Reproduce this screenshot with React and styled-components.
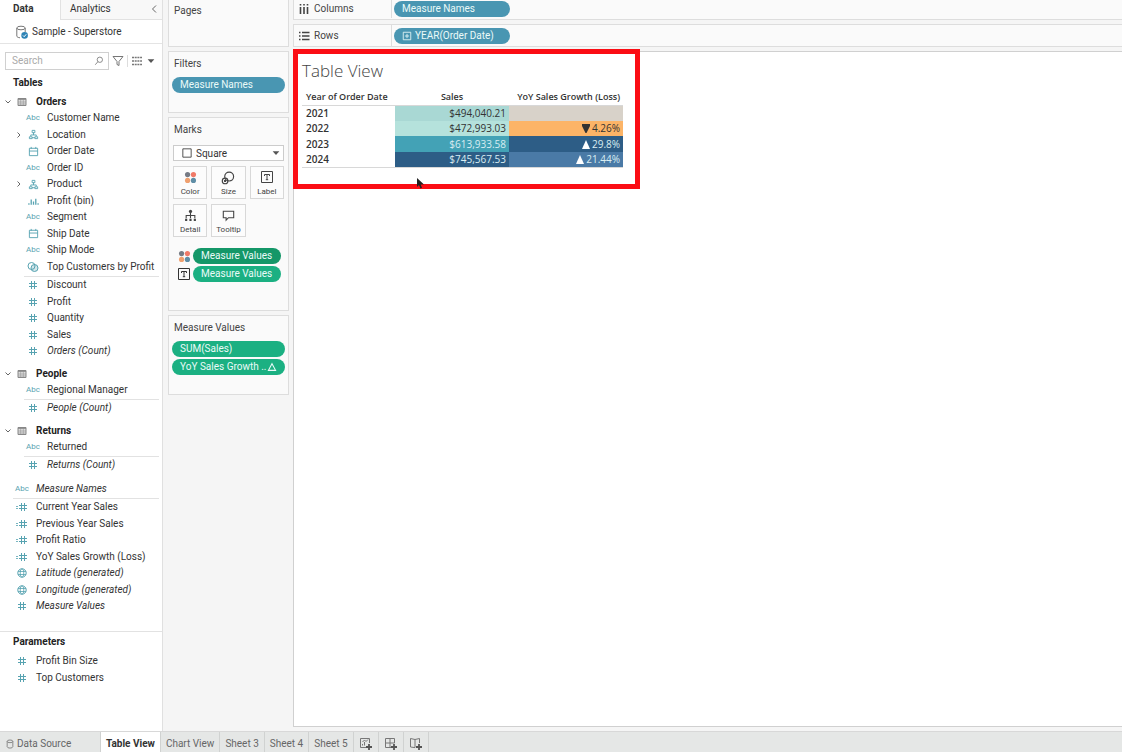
import React from "react";
import styled, { createGlobalStyle, css } from "styled-components";

const GlobalStyle = createGlobalStyle`
  * {
    box-sizing: border-box;
  }

  body {
    margin: 0;
    background: #f5f5f5;
    color: #333;
    font: 10px/16px Roboto, "Liberation Sans", sans-serif;
  }

  button, input, select {
    font: inherit;
    color: inherit;
  }

  svg {
    display: block;
    flex: none;
  }
`;

/* ---------- icons ---------- */

const Icon = ({ size = 12, children, ...rest }) => (
  <svg
    width={size}
    height={size}
    viewBox="0 0 12 12"
    fill="none"
    stroke="currentColor"
    strokeWidth="1"
    aria-hidden="true"
    {...rest}
  >
    {children}
  </svg>
);

const Hash = () => (
  <Icon>
    <path d="M4.5 2v8M7.5 2v8M2 4.5h8M2 7.5h8" />
  </Icon>
);

const CalcHash = () => (
  <Icon>
    <path d="M5.5 2v8M8.5 2v8M3 4.5h8M3 7.5h8" />
    <path d="M0 5.5h2M0 7.5h2" strokeWidth=".8" />
  </Icon>
);

const Calendar = () => (
  <Icon size={11}>
    <path d="M1.5 2.5h9v8h-9zM1.5 5.5h9M3.5 1v2M8.5 1v2" />
  </Icon>
);

const Hierarchy = () => (
  <Icon size={11}>
    <path d="M4.5 1.5h3v2.5h-3zM6 4v2.5M3 8V6.5h6V8M1.5 8.5h3v2h-3zM7.5 8.5h3v2h-3zM4.5 9.5h3" />
  </Icon>
);

const Bins = () => (
  <Icon size={11} strokeWidth="1.4">
    <path d="M1 10.5V9M3.5 10.5V5M6 10.5V7M8.5 10.5V4M11 10.5V9" />
  </Icon>
);

const SetIcon = () => (
  <Icon>
    <circle cx="4.5" cy="5" r="3.5" />
    <circle cx="7.5" cy="7" r="3.5" fill="#4a9bab" fillOpacity=".25" />
  </Icon>
);

const Globe = () => (
  <Icon>
    <circle cx="6" cy="6" r="4.2" />
    <ellipse cx="6" cy="6" rx="1.8" ry="4.2" strokeWidth=".8" />
    <path d="M2 4.5h8M2 7.5h8" strokeWidth=".8" />
  </Icon>
);

const TableIcon = () => (
  <Icon stroke="#888">
    <path d="M2 2.5h8v7H2z" fill="#ddd" />
    <path d="M2 3h8" strokeWidth="1.6" />
    <path d="M2 6h8M2 8h8M4.7 3v6M7.3 3v6" strokeWidth=".5" />
  </Icon>
);

const Chevron = ({ dir }) => {
  const paths = {
    down: "M3.5 4.5L6 7l2.5-2.5",
    right: "M4.5 3.5L7 6 4.5 8.5",
    left: "M8 2.5L4.5 6 8 9.5"
  };
  return (
    <Icon size={12} stroke="#666">
      <path d={paths[dir]} />
    </Icon>
  );
};

const Caret = () => (
  <Icon size={10} stroke="none" fill="#555">
    <path d="M2 4h8L6 8.5z" />
  </Icon>
);

const ColorDots = () => (
  <Icon size={13} stroke="none">
    <circle cx="3.3" cy="3.3" r="2.4" fill="#767b85" />
    <circle cx="8.7" cy="3.3" r="2.4" fill="#f07a68" />
    <circle cx="3.3" cy="8.7" r="2.4" fill="#efa06f" />
    <circle cx="8.7" cy="8.7" r="2.4" fill="#5f8ea6" />
  </Icon>
);

const LabelIcon = () => (
  <Icon>
    <path d="M.5.5h11v11H.5zM3.5 5V3.5h5V5M6 3.5v5.2M4.8 8.7h2.4" />
  </Icon>
);

const SizeIcon = () => (
  <Icon size={14}>
    <circle cx="7" cy="4.8" r="3.8" />
    <circle cx="3.5" cy="8.5" r="2.4" />
    <circle cx="3.5" cy="8.5" r=".5" />
  </Icon>
);

const DetailIcon = () => (
  <Icon size={13}>
    <circle cx="6" cy="2.2" r="1.5" fill="currentColor" stroke="none" />
    <path d="M6 3v5.5M2 8.5V6h8v2.5" />
    <path d="M1 9h2v2H1zM5 9h2v2H5zM9 9h2v2H9z" fill="currentColor" stroke="none" />
  </Icon>
);

const TooltipIcon = () => (
  <Icon size={13}>
    <path d="M1.2 2h9.6v6H6l-2.2 2.3V8H1.2z" />
  </Icon>
);

const ColumnsIcon = () => (
  <Icon strokeWidth="1.6">
    <path d="M2.5 1v1.6M6 1v1.6M9.5 1v1.6M2.5 4v7M6 4v7M9.5 4v7" />
  </Icon>
);

const RowsIcon = () => (
  <Icon strokeWidth="1.4">
    <path d="M1 2.5h1.5M1 6h1.5M1 9.5h1.5M4 2.5h7.5M4 6h7.5M4 9.5h7.5" />
  </Icon>
);

const Plus = () => (
  <Icon size={10}>
    <path d="M1.5 1.5h9v9h-9zM6 3.5v5M3.5 6h5" />
  </Icon>
);

const Delta = () => (
  <Icon size={10} strokeWidth="1.3">
    <path d="M6 2l4.3 8H1.7z" />
  </Icon>
);

const DataSourceIcon = () => (
  <svg width="14" height="14" viewBox="0 0 14 14" fill="none" stroke="#777" aria-hidden="true">
    <ellipse cx="6" cy="3" rx="4.2" ry="1.8" />
    <path d="M1.8 3v8c0 1 1.5 1.6 3.2 1.8M10.2 3v4" />
    <circle cx="9.6" cy="10.4" r="3.3" fill="#2e83b5" stroke="none" />
    <path d="M8 10.5l1.2 1.2 2-2.4" stroke="#fff" />
  </svg>
);

const Cylinder = () => (
  <Icon size={10} stroke="#777">
    <ellipse cx="6" cy="2.8" rx="3.4" ry="1.6" />
    <path d="M2.6 2.8v6.6c0 2 6.8 2 6.8 0V2.8" />
  </Icon>
);

const newSheetPaths = {
  sheet: "M10.5 6V1.5h-9v9H7M3.5 8.5V7M5.5 8.5V5M3.5 5l2-2 1.5 1.5 2-2",
  dashboard: "M10.5 6V1.5h-9v9H7M1.5 6h9M6 1.5v9",
  story: "M10.5 6V1.5L6 2.5l-4.5-1v8.5l4.5.6M6 2.5v8"
};

const NewSheetIcon = ({ kind }) => (
  <svg width="14" height="14" viewBox="0 0 14 14" fill="none" stroke="#777" aria-hidden="true">
    <path d={newSheetPaths[kind]} />
    <path d="M10 7v6M7 10h6" stroke="#555" strokeWidth="1.8" />
  </svg>
);

/* ---------- layout ---------- */

const Page = styled.div`
  display: flex;
  flex-direction: column;
  min-height: 100vh;
`;

const Workspace = styled.div`
  display: flex;
  flex: 1;
`;

/* ---------- data pane ---------- */

const DataPane = styled.aside`
  flex: none;
  width: 163px;
  background: #fff;
  border-right: 1px solid #e0e0e0;
`;

const PaneTabs = styled.div`
  display: flex;
  height: 20px;
`;

const PaneTab = styled.button`
  display: flex;
  align-items: center;
  justify-content: space-between;
  border: 0;
  padding: 0 2px 1px 9px;
  background: #f8f8f8;
  border-left: 1px solid #e2e2e2;
  border-bottom: 1px solid #e2e2e2;
  flex: 1;

  ${({ $active }) =>
    $active &&
    css`
      flex: none;
      width: 60px;
      padding-left: 13px;
      background: #fff;
      border-color: transparent;
      border-left: 0;
      font-weight: 700;
    `}
`;

const DataSourceRow = styled.div`
  display: flex;
  align-items: center;
  gap: 3px;
  height: 24px;
  padding: 0 15px;
  border-bottom: 1px solid #e4e4e4;
`;

const SearchRow = styled.div`
  display: flex;
  align-items: center;
  padding: 8px 8px 5px 5px;
  color: #777;
`;

const SearchBox = styled.label`
  display: flex;
  align-items: center;
  width: 104px;
  height: 18px;
  padding: 0 4px 0 6px;
  border: 1px solid #d0d0d0;

  input {
    flex: 1;
    min-width: 0;
    padding: 0;
    border: 0;
    outline: 0;
    background: none;
  }

  input::placeholder {
    color: #aaa;
  }
`;

const IconButton = styled.button`
  display: flex;
  align-items: center;
  padding: 0;
  margin-left: 3px;
  border: 0;
  background: none;
`;

const ViewButton = styled(IconButton)`
  gap: 3px;
  padding-left: 3px;
  border-left: 1px solid #ddd;
`;

const PaneHeading = styled.h2`
  margin: 0 0 3px;
  padding-left: 13px;
  font-size: 10px;
  line-height: 16px;
  color: #222;
`;

const Group = styled.section`
  margin-bottom: 7px;
`;

const GroupTitle = styled.h3`
  display: flex;
  align-items: center;
  margin: 0;
  height: 16px;
  padding-left: 2px;
  font-size: 10px;
  color: #222;
`;

const IconSlot = styled.span`
  display: flex;
  justify-content: center;
  width: 16px;
  margin-right: 6px;
  color: #57a3b1;
`;

const ChevronSlot = styled.span`
  width: 12px;
`;

const Fields = styled.ul`
  list-style: none;
  margin: 0;
  padding: 0;
  margin-left: ${({ $nested }) => ($nested ? "24px" : "13px")};

  & + & {
    margin-top: 1px;
    border-top: 1px solid #e2e2e2;
    margin-right: 3px;
  }
`;

const FieldItem = styled.li`
  display: flex;
  align-items: center;
  height: 16px;
  margin-left: -11px;
  white-space: nowrap;
  font-style: ${({ $generated }) => ($generated ? "italic" : "normal")};

  &:nth-child(even) {
    height: 17px;
  }
`;

const Abc = styled.span`
  font-size: 8px;
  font-style: normal;
`;

const LooseFields = styled.section`
  padding-top: 1px;
`;

const Parameters = styled.section`
  margin-top: 17px;
  padding-top: 2px;
  border-top: 1px solid #e2e2e2;
`;

/* ---------- cards ---------- */

const Cards = styled.div`
  display: flex;
  flex-direction: column;
  gap: 4px;
  flex: none;
  width: 130px;
  padding: 0 4px 0 5px;
`;

const Card = styled.section`
  min-height: ${({ $height }) => $height};
  padding: 4px 3px 0;
  border: 1px solid #ddd;
  background: #fafafa;

  &:first-child {
    padding-top: 3px;
    border-top: 0;
  }
`;

const CardTitle = styled.h2`
  margin: 0 0 5px;
  padding-left: 2px;
  font-size: 10px;
  font-weight: 400;
  line-height: 16px;
  color: #444;
`;

const pillColors = {
  blue: "#4996b2",
  green: "#1bb082",
  darkGreen: "#149768"
};

const Pill = styled.div`
  display: flex;
  align-items: center;
  justify-content: ${({ $spread }) => ($spread ? "space-between" : "flex-start")};
  gap: ${({ $spread }) => ($spread ? "0" : "3px")};
  flex: ${({ $fixed }) => ($fixed ? "0 0 116px" : "1")};
  height: 16px;
  padding: 0 8px;
  border-radius: 8px;
  background: ${({ $color }) => pillColors[$color]};
  color: #eafaf8;
  white-space: nowrap;
`;

const PillStack = styled.div`
  display: grid;
  grid-template-columns: minmax(0, 1fr);
  gap: 2px;
`;

const MarkBody = styled.div`
  padding: 2px 1px 0;
`;

const MarkSelect = styled.div`
  position: relative;
  margin-bottom: 5px;

  select {
    display: block;
    width: 100%;
    height: 16px;
    padding: 0 22px;
    appearance: none;
    border: 1px solid #ccc;
    border-radius: 0;
    background: #fff;
  }

  svg {
    position: absolute;
    top: 3px;
    left: 9px;
    pointer-events: none;
  }

  svg:last-child {
    left: auto;
    right: 3px;
  }
`;

const MarkButtons = styled.div`
  display: grid;
  grid-template-columns: repeat(3, 1fr);
  gap: 5px 4px;
`;

const MarkButton = styled.button`
  display: flex;
  flex-direction: column;
  align-items: center;
  justify-content: space-between;
  height: 33px;
  padding: 4px 0 1px;
  border: 1px solid #d8d8d8;
  background: #fcfcfc;
  font-size: 8px;
  line-height: 10px;
  color: #444;
`;

const Encodings = styled.div`
  display: grid;
  gap: 2px;
  padding: 11px 3px 0 4px;
`;

const Encoding = styled.div`
  display: flex;
  align-items: center;
  gap: 2px;
`;

const EncodingIcon = styled.span`
  display: flex;
  justify-content: center;
  width: 14px;
`;

/* ---------- shelves and worksheet ---------- */

const Main = styled.main`
  display: flex;
  flex-direction: column;
  flex: 1;
  min-width: 0;
`;

const Shelf = styled.div`
  display: flex;
  align-items: center;
  height: 23px;
  margin-bottom: 4px;
  border: 1px solid #ddd;
  border-right: 0;
  background: #fafafa;

  &:first-child {
    height: 20px;
    padding-bottom: 1px;
    border-top: 0;
  }
`;

const ShelfLabel = styled.div`
  display: flex;
  align-items: center;
  align-self: stretch;
  gap: 4px;
  width: 98px;
  margin-right: 2px;
  padding-left: 4px;
  border-right: 1px solid #ddd;
  color: #444;
`;

const Sheet = styled.section`
  flex: 1;
  margin-bottom: 4px;
  border: 1px solid #d0d0d0;
  border-right: 0;
  background: #fff;
`;

const SheetContent = styled.div`
  position: relative;
  width: 346px;
  padding: 9px 17px 21px 8px;
`;

const Highlight = styled.div`
  position: absolute;
  inset: -3px 0 0 -1px;
  border: 5px solid #fb0d14;
  pointer-events: none;
`;

const Pointer = styled.svg`
  position: absolute;
  left: 123px;
  top: 126px;
`;

const SheetTitle = styled.h1`
  margin: 0 0 8px;
  font: 300 17px/20px "Open Sans", "Noto Sans", sans-serif;
  color: #444;
`;

const CrossTab = styled.table`
  width: 100%;
  table-layout: fixed;
  border-collapse: collapse;
  font: 10px/15px "Open Sans", "Noto Sans", sans-serif;

  th, td {
    height: 16px;
    padding: 0 3px;
  }

  thead th {
    padding: 0;
    font-size: 9px;
    font-weight: 600;
    white-space: nowrap;
    border-bottom: 1px solid #d8d8d8;
  }

  tbody tr:nth-child(even) > * {
    height: 15px;
  }

  tbody th {
    padding-left: 4px;
    font-weight: 600;
    text-align: left;
  }

  thead th:first-child {
    padding-left: 4px;
    text-align: left;
  }

  thead th:last-child {
    padding-right: 3px;
    text-align: right;
  }

  tbody tr:last-child > * {
    border-bottom: 1px solid #d8d8d8;
  }
`;

const Cell = styled.td`
  background: ${({ $bg }) => $bg};
  color: ${({ $light }) => ($light ? "#d9edf2" : "#333")};
  text-align: right;

  svg {
    display: inline-block;
    margin-right: 2px;
    vertical-align: -1px;
  }
`;

/* ---------- sheet tabs ---------- */

const TabBar = styled.nav`
  display: flex;
  height: 21px;
  border-top: 1px solid #d8d8d8;
  background: #e5e7e6;
`;

const SheetTab = styled.button`
  display: flex;
  align-items: center;
  gap: 2px;
  padding: 3px 5px 0;
  border: 0;
  border-right: 1px solid #d0d2d1;
  background: ${({ $active }) => ($active ? "#fff" : "transparent")};
  color: ${({ $active }) => ($active ? "#333" : "#666")};
  font-weight: ${({ $active }) => ($active ? 700 : 400)};
  min-width: ${({ $wide }) => ($wide ? "101px" : "0")};
`;

/* ---------- data ---------- */

const fieldIcons = {
  abc: <Abc>Abc</Abc>,
  hash: <Hash />,
  calc: <CalcHash />,
  date: <Calendar />,
  tree: <Hierarchy />,
  bins: <Bins />,
  set: <SetIcon />,
  globe: <Globe />
};

const groups = [
  {
    name: "Orders",
    dimensions: [
      { name: "Customer Name", icon: "abc" },
      { name: "Location", icon: "tree", expandable: true },
      { name: "Order Date", icon: "date" },
      { name: "Order ID", icon: "abc" },
      { name: "Product", icon: "tree", expandable: true },
      { name: "Profit (bin)", icon: "bins" },
      { name: "Segment", icon: "abc" },
      { name: "Ship Date", icon: "date" },
      { name: "Ship Mode", icon: "abc" },
      { name: "Top Customers by Profit", icon: "set" }
    ],
    measures: [
      { name: "Discount", icon: "hash" },
      { name: "Profit", icon: "hash" },
      { name: "Quantity", icon: "hash" },
      { name: "Sales", icon: "hash" },
      { name: "Orders (Count)", icon: "hash", generated: true }
    ]
  },
  {
    name: "People",
    dimensions: [{ name: "Regional Manager", icon: "abc" }],
    measures: [{ name: "People (Count)", icon: "hash", generated: true }]
  },
  {
    name: "Returns",
    dimensions: [{ name: "Returned", icon: "abc" }],
    measures: [{ name: "Returns (Count)", icon: "hash", generated: true }]
  }
];

const looseDimensions = [{ name: "Measure Names", icon: "abc", generated: true }];

const looseMeasures = [
  { name: "Current Year Sales", icon: "calc" },
  { name: "Previous Year Sales", icon: "calc" },
  { name: "Profit Ratio", icon: "calc" },
  { name: "YoY Sales Growth (Loss)", icon: "calc" },
  { name: "Latitude (generated)", icon: "globe", generated: true },
  { name: "Longitude (generated)", icon: "globe", generated: true },
  { name: "Measure Values", icon: "hash", generated: true }
];

const parameters = [
  { name: "Profit Bin Size", icon: "hash" },
  { name: "Top Customers", icon: "hash" }
];

const marks = [
  { name: "Color", icon: <ColorDots /> },
  { name: "Size", icon: <SizeIcon /> },
  { name: "Label", icon: <LabelIcon /> },
  { name: "Detail", icon: <DetailIcon /> },
  { name: "Tooltip", icon: <TooltipIcon /> }
];

const rows = [
  { year: 2021, sales: "$494,040.21", bg: "#a9d8d4", growthBg: "#d8d2c9" },
  { year: 2022, sales: "$472,993.03", bg: "#b5e2dc", growth: "4.26%", growthBg: "#fcb467" },
  { year: 2023, sales: "$613,933.58", bg: "#43a2b6", light: true, growth: "29.8%", growthBg: "#2d5d86", up: true },
  { year: 2024, sales: "$745,567.53", bg: "#2d5d86", light: true, growth: "21.44%", growthBg: "#4a7aa6", up: true }
];

const FieldList = ({ fields, nested }) => (
  <Fields $nested={nested}>
    {fields.map(({ name, icon, generated, expandable }) => (
      <FieldItem key={name} $generated={generated}>
        <ChevronSlot>{expandable && <Chevron dir="right" />}</ChevronSlot>
        <IconSlot>{fieldIcons[icon]}</IconSlot>
        {name}
      </FieldItem>
    ))}
  </Fields>
);

const Trend = ({ up }) => (
  <svg width="8" height="9" viewBox="0 0 8 9" fill={up ? "#fff" : "#333"} aria-hidden="true">
    <path d={up ? "M4 0l4 9H0z" : "M0 0h8v2L4.5 9h-1L0 2z"} />
  </svg>
);

const SidePane = () => (
  <DataPane>
    <PaneTabs>
      <PaneTab $active>Data</PaneTab>
      <PaneTab>
        Analytics
        <Chevron dir="left" />
      </PaneTab>
    </PaneTabs>
    <DataSourceRow>
      <DataSourceIcon />
      Sample - Superstore
    </DataSourceRow>
    <SearchRow>
      <SearchBox>
        <input type="text" placeholder="Search" aria-label="Search" />
        <Icon size={10}>
          <circle cx="7" cy="4.5" r="3.2" />
          <path d="M4.7 6.8L1.5 10.5" />
        </Icon>
      </SearchBox>
      <IconButton aria-label="Filter fields">
        <Icon>
          <path d="M1 1.5h10L7 6.5v4L5 9.5v-3z" />
        </Icon>
      </IconButton>
      <ViewButton aria-label="View options">
        <Icon strokeWidth="1.6">
          <path d="M1 2.5h10M1 6h10M1 9.5h10" strokeDasharray="2 .7" />
        </Icon>
        <Caret />
      </ViewButton>
    </SearchRow>
    <PaneHeading>Tables</PaneHeading>
    {groups.map(({ name, dimensions, measures }) => (
      <Group key={name}>
        <GroupTitle>
          <ChevronSlot>
            <Chevron dir="down" />
          </ChevronSlot>
          <IconSlot>
            <TableIcon />
          </IconSlot>
          {name}
        </GroupTitle>
        <FieldList fields={dimensions} nested />
        <FieldList fields={measures} nested />
      </Group>
    ))}
    <LooseFields>
      <FieldList fields={looseDimensions} />
      <FieldList fields={looseMeasures} />
    </LooseFields>
    <Parameters>
      <PaneHeading>Parameters</PaneHeading>
      <FieldList fields={parameters} />
    </Parameters>
  </DataPane>
);

const CardColumn = () => (
  <Cards>
    <Card $height="47px">
      <CardTitle>Pages</CardTitle>
    </Card>
    <Card $height="62px">
      <CardTitle>Filters</CardTitle>
      <PillStack>
        <Pill $color="blue">Measure Names</Pill>
      </PillStack>
    </Card>
    <Card $height="194px">
      <CardTitle>Marks</CardTitle>
      <MarkBody>
        <MarkSelect>
          <select aria-label="Mark type" defaultValue="Square">
            <option>Square</option>
          </select>
          <Icon size={10}>
            <path d="M1 1h10v10H1z" />
          </Icon>
          <Caret />
        </MarkSelect>
        <MarkButtons>
          {marks.map(({ name, icon }) => (
            <MarkButton key={name}>
              {icon}
              {name}
            </MarkButton>
          ))}
        </MarkButtons>
        <Encodings>
          <Encoding>
            <EncodingIcon>
              <ColorDots />
            </EncodingIcon>
            <Pill $color="darkGreen">Measure Values</Pill>
          </Encoding>
          <Encoding>
            <EncodingIcon>
              <LabelIcon />
            </EncodingIcon>
            <Pill $color="green">Measure Values</Pill>
          </Encoding>
        </Encodings>
      </MarkBody>
    </Card>
    <Card $height="80px">
      <CardTitle>Measure Values</CardTitle>
      <PillStack>
        <Pill $color="green">SUM(Sales)</Pill>
        <Pill $color="green" $spread>
          YoY Sales Growth ..
          <Delta />
        </Pill>
      </PillStack>
    </Card>
  </Cards>
);

const Worksheet = () => (
  <Sheet>
    <SheetContent>
      <SheetTitle>Table View</SheetTitle>
      <CrossTab>
        <colgroup>
          <col width="29%" />
          <col />
          <col />
        </colgroup>
        <thead>
          <tr>
            <th scope="col">Year of Order Date</th>
            <th scope="col">Sales</th>
            <th scope="col">YoY Sales Growth (Loss)</th>
          </tr>
        </thead>
        <tbody>
          {rows.map(({ year, sales, bg, light, growth, growthBg, up }) => (
            <tr key={year}>
              <th scope="row">{year}</th>
              <Cell $bg={bg} $light={light}>
                {sales}
              </Cell>
              <Cell $bg={growthBg} $light={light}>
                {growth && <Trend up={up} />}
                {growth}
              </Cell>
            </tr>
          ))}
        </tbody>
      </CrossTab>
      <Highlight />
      <Pointer width="8" height="11" viewBox="0 0 8 11" aria-hidden="true">
        <path d="M0 0v9l2-2 1.5 3.5 1.5-.7L3.6 6.5H7z" fill="#222" />
      </Pointer>
    </SheetContent>
  </Sheet>
);

export default function App() {
  return (
    <>
      <GlobalStyle />
      <Page>
        <Workspace>
          <SidePane />
          <CardColumn />
          <Main>
            <Shelf>
              <ShelfLabel>
                <ColumnsIcon />
                Columns
              </ShelfLabel>
              <Pill $color="blue" $fixed>
                Measure Names
              </Pill>
            </Shelf>
            <Shelf>
              <ShelfLabel>
                <RowsIcon />
                Rows
              </ShelfLabel>
              <Pill $color="blue" $fixed>
                <Plus />
                YEAR(Order Date)
              </Pill>
            </Shelf>
            <Worksheet />
          </Main>
        </Workspace>
        <TabBar>
          <SheetTab $wide>
            <Cylinder />
            Data Source
          </SheetTab>
          <SheetTab $active>Table View</SheetTab>
          <SheetTab>Chart View</SheetTab>
          <SheetTab>Sheet 3</SheetTab>
          <SheetTab>Sheet 4</SheetTab>
          <SheetTab>Sheet 5</SheetTab>
          <SheetTab aria-label="New worksheet">
            <NewSheetIcon kind="sheet" />
          </SheetTab>
          <SheetTab aria-label="New dashboard">
            <NewSheetIcon kind="dashboard" />
          </SheetTab>
          <SheetTab aria-label="New story">
            <NewSheetIcon kind="story" />
          </SheetTab>
        </TabBar>
      </Page>
    </>
  );
}
